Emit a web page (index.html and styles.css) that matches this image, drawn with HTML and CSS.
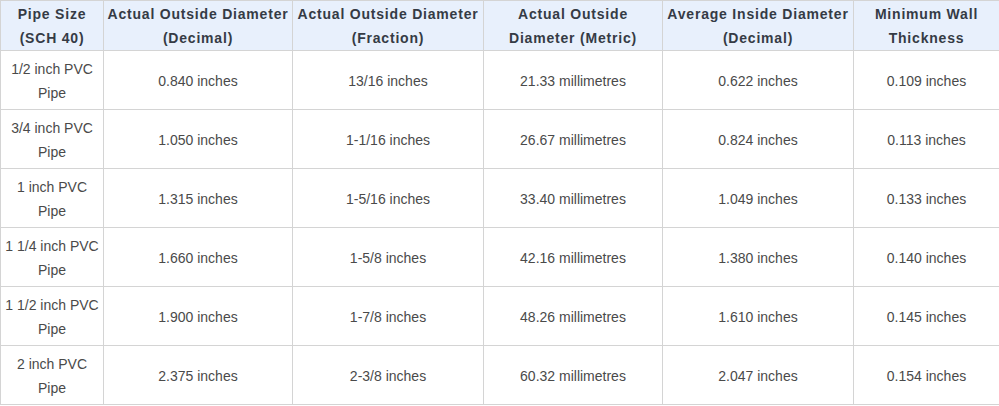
FILE: index.html
```html
<!DOCTYPE html>
<html>
<head>
<meta charset="utf-8">
<link rel="stylesheet" href="styles.css">
</head>
<body>
<table class="pipe-table">
  <colgroup>
    <col class="c1"><col class="c2"><col class="c3"><col class="c4"><col class="c5"><col class="c6">
  </colgroup>
  <thead>
    <tr>
      <th>Pipe Size (SCH 40)</th>
      <th>Actual Outside Diameter (Decimal)</th>
      <th>Actual Outside Diameter (Fraction)</th>
      <th>Actual Outside Diameter (Metric)</th>
      <th>Average Inside Diameter (Decimal)</th>
      <th>Minimum Wall Thickness</th>
    </tr>
  </thead>
  <tbody>
    <tr><td>1/2 inch PVC Pipe</td><td>0.840 inches</td><td>13/16 inches</td><td>21.33 millimetres</td><td>0.622 inches</td><td>0.109 inches</td></tr>
    <tr><td>3/4 inch PVC Pipe</td><td>1.050 inches</td><td>1-1/16 inches</td><td>26.67 millimetres</td><td>0.824 inches</td><td>0.113 inches</td></tr>
    <tr><td>1 inch PVC Pipe</td><td>1.315 inches</td><td>1-5/16 inches</td><td>33.40 millimetres</td><td>1.049 inches</td><td>0.133 inches</td></tr>
    <tr><td>1 1/4 inch PVC Pipe</td><td>1.660 inches</td><td>1-5/8 inches</td><td>42.16 millimetres</td><td>1.380 inches</td><td>0.140 inches</td></tr>
    <tr><td>1 1/2 inch PVC Pipe</td><td>1.900 inches</td><td>1-7/8 inches</td><td>48.26 millimetres</td><td>1.610 inches</td><td>0.145 inches</td></tr>
    <tr><td>2 inch PVC Pipe</td><td>2.375 inches</td><td>2-3/8 inches</td><td>60.32 millimetres</td><td>2.047 inches</td><td>0.154 inches</td></tr>
  </tbody>
</table>
</body>
</html>
```
FILE: styles.css
```css
html, body {
  margin: 0;
  padding: 0;
  background: #ffffff;
}
.pipe-table {
  border-collapse: collapse;
  table-layout: fixed;
  width: 999px;
  font-family: "Liberation Sans", Arial, sans-serif;
}
.c1 { width: 103px; }
.c2 { width: 189px; }
.c3 { width: 191px; }
.c4 { width: 179px; }
.c5 { width: 191px; }
.c6 { width: 146px; }
.pipe-table th,
.pipe-table td {
  border: 1px solid #d4d4d4;
  text-align: center;
  vertical-align: middle;
  padding: 0 3px;
  line-height: 24px;
}
.pipe-table th {
  background: #e8f0fc;
  color: #353b45;
  font-size: 14px;
  font-weight: bold;
  letter-spacing: 0.8px;
  padding: 0 1px;
  height: 49px;
}
.pipe-table td {
  color: #4a4a4a;
  font-size: 14px;
  height: 57px;
  padding-top: 1px;
}
```
